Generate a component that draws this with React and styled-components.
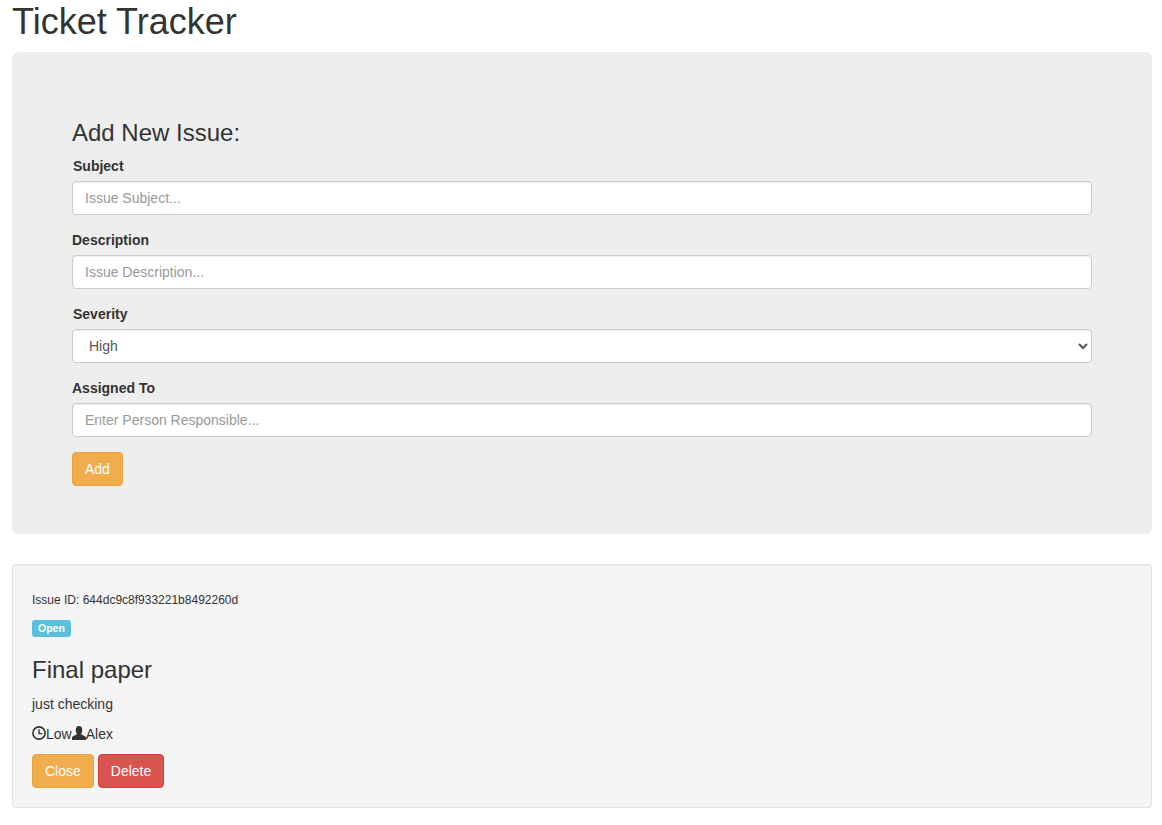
import React from 'react';
import styled, { createGlobalStyle } from 'styled-components';

const GlobalStyle = createGlobalStyle`
  * { box-sizing: border-box; }
  body {
    margin: 0;
    font-family: "Liberation Sans", Arial, sans-serif;
    font-size: 14px;
    line-height: 20px;
    color: #333;
    background: #fff;
  }
`;

const Container = styled.div`
  width: 1140px;
  margin-left: 12px;
`;

const Title = styled.h1`
  margin: 0 0 10px;
  padding-top: 2px;
  font-size: 36px;
  font-weight: 400;
  line-height: 40px;
  color: #333;
`;

const Jumbotron = styled.div`
  background: #eee;
  border-radius: 6px;
  padding: 68px 60px 48px;
  margin-bottom: 30px;
`;

const FormTitle = styled.h3`
  margin: 0 0 10px;
  font-size: 24px;
  font-weight: 400;
  line-height: 26px;
`;

const FormGroup = styled.div`
  margin-bottom: 15px;
`;

const Label = styled.label`
  display: block;
  margin-bottom: 5px;
  padding-left: ${({ $indent }) => $indent || 0}px;
  font-weight: 700;
  color: #333;
`;

const Input = styled.input`
  display: block;
  width: 100%;
  height: 34px;
  padding: 6px 12px;
  font: inherit;
  color: #555;
  background: #fff;
  border: 1px solid #ccc;
  border-radius: 4px;
  box-shadow: inset 0 1px 1px rgba(0, 0, 0, 0.075);

  &::placeholder {
    color: #999;
    opacity: 1;
  }
`;

const Select = styled.select`
  display: block;
  width: 100%;
  height: 34px;
  padding: 6px 12px;
  font: inherit;
  color: #555;
  background: #fff;
  border: 1px solid #ccc;
  border-radius: 4px;
  box-shadow: inset 0 1px 1px rgba(0, 0, 0, 0.075);
`;

const Button = styled.button`
  display: inline-block;
  height: 34px;
  padding: 6px 12px;
  font: inherit;
  color: #fff;
  background: ${({ $danger }) => ($danger ? '#d9534f' : '#f0ad4e')};
  border: 1px solid ${({ $danger }) => ($danger ? '#d43f3a' : '#eea236')};
  border-radius: 4px;
`;

const Well = styled.div`
  background: #f5f5f5;
  border: 1px solid #e3e3e3;
  border-radius: 4px;
  box-shadow: inset 0 1px 1px rgba(0, 0, 0, 0.05);
  padding: 19px;
`;

const IssueId = styled.h6`
  margin: 9px 0 13px;
  font-size: 12px;
  font-weight: 400;
  line-height: 14px;
`;

const Badge = styled.span`
  display: inline-block;
  padding: 2px 6px 3px;
  background: #5bc0de;
  color: #fff;
  font-size: 10.5px;
  font-weight: 700;
  line-height: 12px;
  border-radius: 3px;
  vertical-align: top;
`;

const BadgeRow = styled.div`
  height: 17px;
  margin-bottom: 20px;
`;

const IssueTitle = styled.h3`
  margin: 0 0 11px;
  font-size: 24px;
  font-weight: 400;
  line-height: 26px;
`;

const Text = styled.p`
  margin: 0 0 10px;
`;

const Meta = styled.p`
  margin: 0 0 10px;
  display: flex;
  align-items: center;
`;

const Icon = styled.svg`
  width: 14px;
  height: 14px;
  margin-top: -2px;
`;

const Actions = styled.div`
  display: flex;
  gap: 4px;
`;

const ClockIcon = () => (
  <Icon viewBox="0 0 14 14">
    <circle cx="7" cy="7" r="6.1" fill="none" stroke="#333" strokeWidth="1.6" />
    <path d="M7 3.2V7.6H10.4" fill="none" stroke="#333" strokeWidth="1.4" />
  </Icon>
);

const UserIcon = () => (
  <Icon viewBox="0 0 14 14">
    <ellipse cx="7" cy="4.2" rx="3.2" ry="4.2" fill="#333" />
    <path d="M0 14V11.6C0 10.2 3.4 9.6 5 8H9C10.6 9.6 14 10.2 14 11.6V14Z" fill="#333" />
  </Icon>
);

const App = () => (
  <>
    <GlobalStyle />
    <Container>
      <Title>Ticket Tracker</Title>
      <Jumbotron>
        <FormTitle>Add New Issue:</FormTitle>
        <form>
          <FormGroup>
            <Label $indent={1}>Subject</Label>
            <Input placeholder="Issue Subject..." />
          </FormGroup>
          <FormGroup>
            <Label>Description</Label>
            <Input placeholder="Issue Description..." />
          </FormGroup>
          <FormGroup>
            <Label $indent={1}>Severity</Label>
            <Select defaultValue="High">
              <option>Low</option>
              <option>Medium</option>
              <option>High</option>
            </Select>
          </FormGroup>
          <FormGroup>
            <Label>Assigned To</Label>
            <Input placeholder="Enter Person Responsible..." />
          </FormGroup>
          <Button type="button">Add</Button>
        </form>
      </Jumbotron>
      <Well>
        <IssueId>Issue ID: 644dc9c8f933221b8492260d</IssueId>
        <BadgeRow>
          <Badge>Open</Badge>
        </BadgeRow>
        <IssueTitle>Final paper</IssueTitle>
        <Text>just checking</Text>
        <Meta>
          <ClockIcon />Low<UserIcon />Alex
        </Meta>
        <Actions>
          <Button type="button">Close</Button>
          <Button type="button" $danger>Delete</Button>
        </Actions>
      </Well>
    </Container>
  </>
);

export default App;
